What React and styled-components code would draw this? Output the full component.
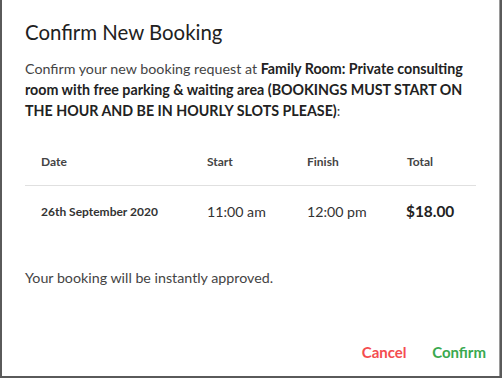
import React from "react"
import styled, { createGlobalStyle } from "styled-components"

const GlobalStyle = createGlobalStyle`
  html, body {
    margin: 0;
    padding: 0;
    background: #5a5a5a;
    font-family: Lato, "Open Sans", sans-serif;
    -webkit-font-smoothing: antialiased;
  }
`

const Page = styled.div`
  width: 502px;
  height: 378px;
  overflow: hidden;
`

const Dialog = styled.div`
  margin-left: 2px;
  width: 498px;
  height: 376px;
  background: #fff;
  display: flex;
  flex-direction: column;
  box-sizing: border-box;
  border-right: 1px solid #9a9a9a;
`

const Title = styled.h2`
  margin: 0;
  padding: 16px 23px 0;
  font-size: 20.4px;
  font-weight: 400;
  line-height: 32px;
  color: #212121;
`

const Content = styled.div`
  padding: 10px 23px 0;
`

const Text = styled.p`
  margin: 0;
  font-size: 14.25px;
  line-height: 21px;
  color: #444;
  b {
    font-weight: 700;
    color: #222;
  }
`

const Table = styled.div`
  margin-top: 17px;
`

const Row = styled.div`
  display: grid;
  grid-template-columns: 166px 100px 100px 1fr;
  align-items: center;
  padding-left: 16px;
  height: ${(p) => (p.head ? "47px" : "50px")};
  border-bottom: ${(p) => (p.head ? "1px solid #e0e0e0" : "none")};
`

const HeadCell = styled.span`
  font-size: 12px;
  font-weight: 700;
  color: #444;
`

const DateCell = styled.span`
  font-size: 12px;
  font-weight: 700;
  color: #333;
`

const TimeCell = styled.span`
  font-size: 14.2px;
  color: #333;
`

const TotalCell = styled.span`
  margin-left: -1px;
  font-size: 15.4px;
  font-weight: 700;
  color: #222;
`

const Note = styled(Text)`
  margin-top: 31px;
`

const Actions = styled.div`
  margin-top: auto;
  display: flex;
  justify-content: flex-end;
  gap: 8px;
  padding: 8px 5px 6px 8px;
`

const Button = styled.button`
  min-width: 64px;
  height: 36px;
  padding: 6px 8px;
  border: 0;
  background: transparent;
  font-family: inherit;
  font-size: 15px;
  font-weight: 700;
  color: ${(p) => p.color};
  cursor: pointer;
`

export default function App() {
  return (
    <Page>
      <GlobalStyle />
      <Dialog>
        <Title>Confirm New Booking</Title>
        <Content>
          <Text>
            Confirm your new booking request at{" "}
            <b>
              Family Room: Private consulting room with free parking &amp;
              waiting area (BOOKINGS MUST START ON THE HOUR AND BE IN HOURLY
              SLOTS PLEASE)
            </b>
            :
          </Text>
          <Table>
            <Row head>
              <HeadCell>Date</HeadCell>
              <HeadCell>Start</HeadCell>
              <HeadCell>Finish</HeadCell>
              <HeadCell>Total</HeadCell>
            </Row>
            <Row>
              <DateCell>26th September 2020</DateCell>
              <TimeCell>11:00 am</TimeCell>
              <TimeCell>12:00 pm</TimeCell>
              <TotalCell>$18.00</TotalCell>
            </Row>
          </Table>
          <Note>Your booking will be instantly approved.</Note>
        </Content>
        <Actions>
          <Button color="#f44c4f">Cancel</Button>
          <Button color="#3aa94f">Confirm</Button>
        </Actions>
      </Dialog>
    </Page>
  )
}
